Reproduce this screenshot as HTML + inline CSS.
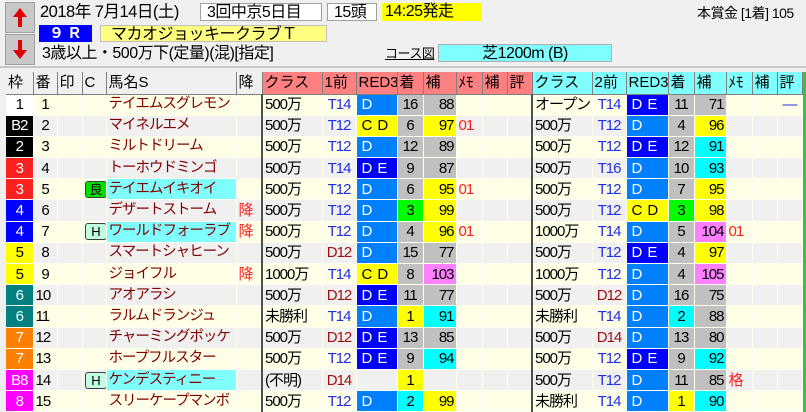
<!DOCTYPE html>
<html><head><meta charset="utf-8"><style>
*{margin:0;padding:0;box-sizing:border-box}
body{width:806px;height:412px;overflow:hidden;background:#f0f0f0;font-family:"Liberation Sans","Noto Sans CJK JP",sans-serif;position:relative;font-size:14px;color:#000}
.a{position:absolute}
.btn{left:5px;width:30px;height:31px;background:#c8c8c8;border:1px solid #a0a0a0}
.t{white-space:nowrap;line-height:18px;letter-spacing:-0.5px}
table{position:absolute;left:6px;top:72px;border-collapse:collapse;table-layout:fixed;width:796px}
td{height:21.2px;padding:0 2px;white-space:nowrap;overflow:hidden;font-size:15px;letter-spacing:-1px;border-right:1px solid #fffff0;border-bottom:1px solid #fffff0;line-height:19px}
td.n{font-size:14.5px}
tr.h td{height:22px;border-right:1px solid #808080;border-bottom:1px solid #808080;background:#f0f0f0;letter-spacing:0}
tr.h td.p{background:#ff8080}
tr.h td.c{background:#80ffff}
tr.o td{background:#ffffe8}
tr.e td{background:#f0f0f0}
td.w{text-align:center}
td.n{color:#800000}
td.k{border-left:2px solid #505050}
td.T{color:#2030e0;text-align:center}
td.Dd{color:#a01010;text-align:center}
tr td.g{background:#c0c0c0;text-align:center}
tr td.y{background:#ffff00;text-align:right}
tr td.cy{background:#00ffff;text-align:right}
tr td.m{background:#ff80ff;text-align:right}
tr td.gr{background:#00ff00;text-align:center}
tr td.gy{background:#c0c0c0;text-align:right}
tr td.yc{background:#ffff00;text-align:center}
tr td.cc{background:#00ffff;text-align:center}
tr td.D{background:#0080ff;color:#fff;letter-spacing:5px;padding-left:5px}
tr td.DE{background:#0000ff;color:#fff;letter-spacing:5px;padding-left:5px}
tr td.CD{background:#ffff00;color:#000;letter-spacing:5px;padding-left:5px}
tr td.nc{background:#80ffff}
.r{color:#ff2020}
.mk{display:inline-block;border:1px solid #404040;border-radius:3px;width:22px;height:17px;line-height:15px;text-align:center;font-size:13px}
</style></head><body>
<div class="a btn" style="top:2px"><svg width="28" height="29"><path d="M14 5 L21 14 L16 14 L16 24 L12 24 L12 14 L7 14 Z" fill="#e00000"/></svg></div>
<div class="a btn" style="top:34px"><svg width="28" height="29"><path d="M14 24 L21 15 L16 15 L16 5 L12 5 L12 15 L7 15 Z" fill="#e00000"/></svg></div>
<div class="a t" style="left:40px;top:3px;font-size:16.5px">2018年 7月14日(土)</div>
<div class="a t" style="left:200px;top:3px;width:122px;height:18px;background:#fff;border:1px solid #a0a0a0;font-size:16px;padding-left:6px">3回中京5日目</div>
<div class="a t" style="left:327px;top:3px;width:50px;height:18px;background:#fff;border:1px solid #a0a0a0;font-size:16px;padding-left:6px">15頭</div>
<div class="a t" style="left:382px;top:3px;width:100px;height:18px;background:#ffff00;font-size:16px;padding-left:3px">14:25発走</div>
<div class="a t" style="left:697px;top:4px;font-size:14px">本賞金 [1着] 105</div>
<div class="a t" style="left:39px;top:25px;width:53px;height:17px;background:#0000ff;color:#fff;font-weight:bold;font-size:15px;padding-left:10px;letter-spacing:3px">９Ｒ</div>
<div class="a t" style="left:100px;top:25px;width:227px;height:17px;background:#ffff80;border:1px solid #c0c0c0;font-size:16px;padding-left:10px">マカオジョッキークラブＴ</div>
<div class="a t" style="left:42px;top:45px;font-size:16px">3歳以上・500万下(定量)(混)[指定]</div>
<div class="a t" style="left:385px;top:45px;font-size:13px;text-decoration:underline">コース図</div>
<div class="a t" style="left:438px;top:44px;width:174px;height:18px;background:#80ffff;border:1px solid #b0b0b0;font-size:16px;text-align:center">芝1200m (B)</div>
<div class="a" style="left:0;top:66px;width:806px;height:2px;background:#c8c8c8"></div>
<div class="a" style="left:802px;top:72px;width:4px;height:340px;background:#40c040"></div>
<table>
<colgroup><col style="width:27px"><col style="width:24px"><col style="width:25px"><col style="width:24px"><col style="width:130px"><col style="width:26px"><col style="width:60px"><col style="width:34px"><col style="width:41px"><col style="width:26px"><col style="width:33px"><col style="width:26px"><col style="width:25px"><col style="width:25px"><col style="width:60px"><col style="width:34px"><col style="width:42px"><col style="width:26px"><col style="width:32px"><col style="width:26px"><col style="width:25px"><col style="width:25px"></colgroup>
<tr class="h"><td>枠</td><td>番</td><td>印</td><td>C</td><td>馬名S</td><td>降</td><td class="p">クラス</td><td class="p">1前</td><td class="p">RED3</td><td class="p">着</td><td class="p">補</td><td class="p">ﾒﾓ</td><td class="p">補</td><td class="p">評</td><td class="c">クラス</td><td class="c">2前</td><td class="c">RED3</td><td class="c">着</td><td class="c">補</td><td class="c">ﾒﾓ</td><td class="c">補</td><td class="c">評</td></tr>
<tr class="o"><td class="w" style="background:#fff">1</td><td class="w">1</td><td></td><td></td><td class="n">テイエムスグレモン</td><td></td><td class="k">500万</td><td class="T">T14</td><td class="D">D</td><td class="g">16</td><td class="gy">88</td><td></td><td></td><td></td><td class="k">オープン</td><td class="T">T14</td><td class="DE">DE</td><td class="g">11</td><td class="gy">71</td><td></td><td></td><td style="color:#2030e0;text-align:center">—</td></tr>
<tr class="e"><td class="w" style="background:#000;color:#fff">B2</td><td class="w">2</td><td></td><td></td><td class="n">マイネルエメ</td><td></td><td class="k">500万</td><td class="T">T12</td><td class="CD">CD</td><td class="g">6</td><td class="y">97</td><td class="r">01</td><td></td><td></td><td class="k">500万</td><td class="T">T12</td><td class="D">D</td><td class="g">4</td><td class="y">96</td><td></td><td></td><td></td></tr>
<tr class="o"><td class="w" style="background:#000;color:#fff">2</td><td class="w">3</td><td></td><td></td><td class="n">ミルトドリーム</td><td></td><td class="k">500万</td><td class="T">T12</td><td class="D">D</td><td class="g">12</td><td class="gy">89</td><td></td><td></td><td></td><td class="k">500万</td><td class="T">T12</td><td class="DE">DE</td><td class="g">12</td><td class="cy">91</td><td></td><td></td><td></td></tr>
<tr class="e"><td class="w" style="background:#ff2020;color:#fff">3</td><td class="w">4</td><td></td><td></td><td class="n">トーホウドミンゴ</td><td></td><td class="k">500万</td><td class="T">T14</td><td class="DE">DE</td><td class="g">9</td><td class="gy">87</td><td></td><td></td><td></td><td class="k">500万</td><td class="T">T16</td><td class="D">D</td><td class="g">10</td><td class="cy">93</td><td></td><td></td><td></td></tr>
<tr class="o"><td class="w" style="background:#ff2020;color:#fff">3</td><td class="w">5</td><td></td><td><span class="mk" style="background:#00e000">良</span></td><td class="n nc">テイエムイキオイ</td><td></td><td class="k">500万</td><td class="T">T12</td><td class="D">D</td><td class="g">6</td><td class="y">95</td><td class="r">01</td><td></td><td></td><td class="k">500万</td><td class="T">T12</td><td class="D">D</td><td class="g">7</td><td class="y">95</td><td></td><td></td><td></td></tr>
<tr class="e"><td class="w" style="background:#0000ff;color:#fff">4</td><td class="w">6</td><td></td><td></td><td class="n">デザートストーム</td><td class="r">降</td><td class="k">500万</td><td class="T">T12</td><td class="D">D</td><td class="gr">3</td><td class="y">99</td><td></td><td></td><td></td><td class="k">500万</td><td class="T">T12</td><td class="CD">CD</td><td class="gr">3</td><td class="y">98</td><td></td><td></td><td></td></tr>
<tr class="o"><td class="w" style="background:#0000ff;color:#fff">4</td><td class="w">7</td><td></td><td><span class="mk" style="background:#c0ffe0">H</span></td><td class="n nc">ワールドフォーラブ</td><td class="r">降</td><td class="k">500万</td><td class="T">T12</td><td class="D">D</td><td class="g">4</td><td class="y">96</td><td class="r">01</td><td></td><td></td><td class="k">1000万</td><td class="T">T14</td><td class="D">D</td><td class="g">5</td><td class="m">104</td><td class="r">01</td><td></td><td></td></tr>
<tr class="e"><td class="w" style="background:#ffff00">5</td><td class="w">8</td><td></td><td></td><td class="n">スマートシャヒーン</td><td></td><td class="k">500万</td><td class="Dd">D12</td><td class="D">D</td><td class="g">15</td><td class="gy">77</td><td></td><td></td><td></td><td class="k">500万</td><td class="T">T12</td><td class="DE">DE</td><td class="g">4</td><td class="y">97</td><td></td><td></td><td></td></tr>
<tr class="o"><td class="w" style="background:#ffff00">5</td><td class="w">9</td><td></td><td></td><td class="n">ジョイフル</td><td class="r">降</td><td class="k">1000万</td><td class="T">T14</td><td class="CD">CD</td><td class="g">8</td><td class="m">103</td><td></td><td></td><td></td><td class="k">1000万</td><td class="T">T12</td><td class="D">D</td><td class="g">4</td><td class="m">105</td><td></td><td></td><td></td></tr>
<tr class="e"><td class="w" style="background:#008080;color:#fff">6</td><td>10</td><td></td><td></td><td class="n">アオアラシ</td><td></td><td class="k">500万</td><td class="Dd">D12</td><td class="DE">DE</td><td class="g">11</td><td class="gy">77</td><td></td><td></td><td></td><td class="k">500万</td><td class="Dd">D12</td><td class="D">D</td><td class="g">16</td><td class="gy">75</td><td></td><td></td><td></td></tr>
<tr class="o"><td class="w" style="background:#008080;color:#fff">6</td><td>11</td><td></td><td></td><td class="n">ラルムドランジュ</td><td></td><td class="k">未勝利</td><td class="T">T14</td><td class="D">D</td><td class="yc">1</td><td class="cy">91</td><td></td><td></td><td></td><td class="k">未勝利</td><td class="T">T14</td><td class="D">D</td><td class="cc">2</td><td class="gy">88</td><td></td><td></td><td></td></tr>
<tr class="e"><td class="w" style="background:#ff8000;color:#fff">7</td><td>12</td><td></td><td></td><td class="n">チャーミングポッケ</td><td></td><td class="k">500万</td><td class="Dd">D12</td><td class="DE">DE</td><td class="g">13</td><td class="gy">85</td><td></td><td></td><td></td><td class="k">500万</td><td class="Dd">D14</td><td class="D">D</td><td class="g">13</td><td class="gy">80</td><td></td><td></td><td></td></tr>
<tr class="o"><td class="w" style="background:#ff8000;color:#fff">7</td><td>13</td><td></td><td></td><td class="n">ホープフルスター</td><td></td><td class="k">500万</td><td class="T">T12</td><td class="DE">DE</td><td class="g">9</td><td class="cy">94</td><td></td><td></td><td></td><td class="k">500万</td><td class="T">T12</td><td class="DE">DE</td><td class="g">9</td><td class="cy">92</td><td></td><td></td><td></td></tr>
<tr class="e"><td class="w" style="background:#ff00ff;color:#fff">B8</td><td>14</td><td></td><td><span class="mk" style="background:#c0ffe0">H</span></td><td class="n nc">ケンデスティニー</td><td></td><td class="k">(不明)</td><td class="Dd">D14</td><td></td><td class="yc">1</td><td></td><td></td><td></td><td></td><td class="k">500万</td><td class="T">T12</td><td class="D">D</td><td class="g">11</td><td class="gy">85</td><td class="r">格</td><td></td><td></td></tr>
<tr class="o"><td class="w" style="background:#ff00ff;color:#fff">8</td><td>15</td><td></td><td></td><td class="n">スリーケープマンボ</td><td></td><td class="k">500万</td><td class="T">T12</td><td class="D">D</td><td class="cc">2</td><td class="y">99</td><td></td><td></td><td></td><td class="k">未勝利</td><td class="T">T14</td><td class="D">D</td><td class="yc">1</td><td class="cy">90</td><td></td><td></td><td></td></tr>
</table>
</body></html>
